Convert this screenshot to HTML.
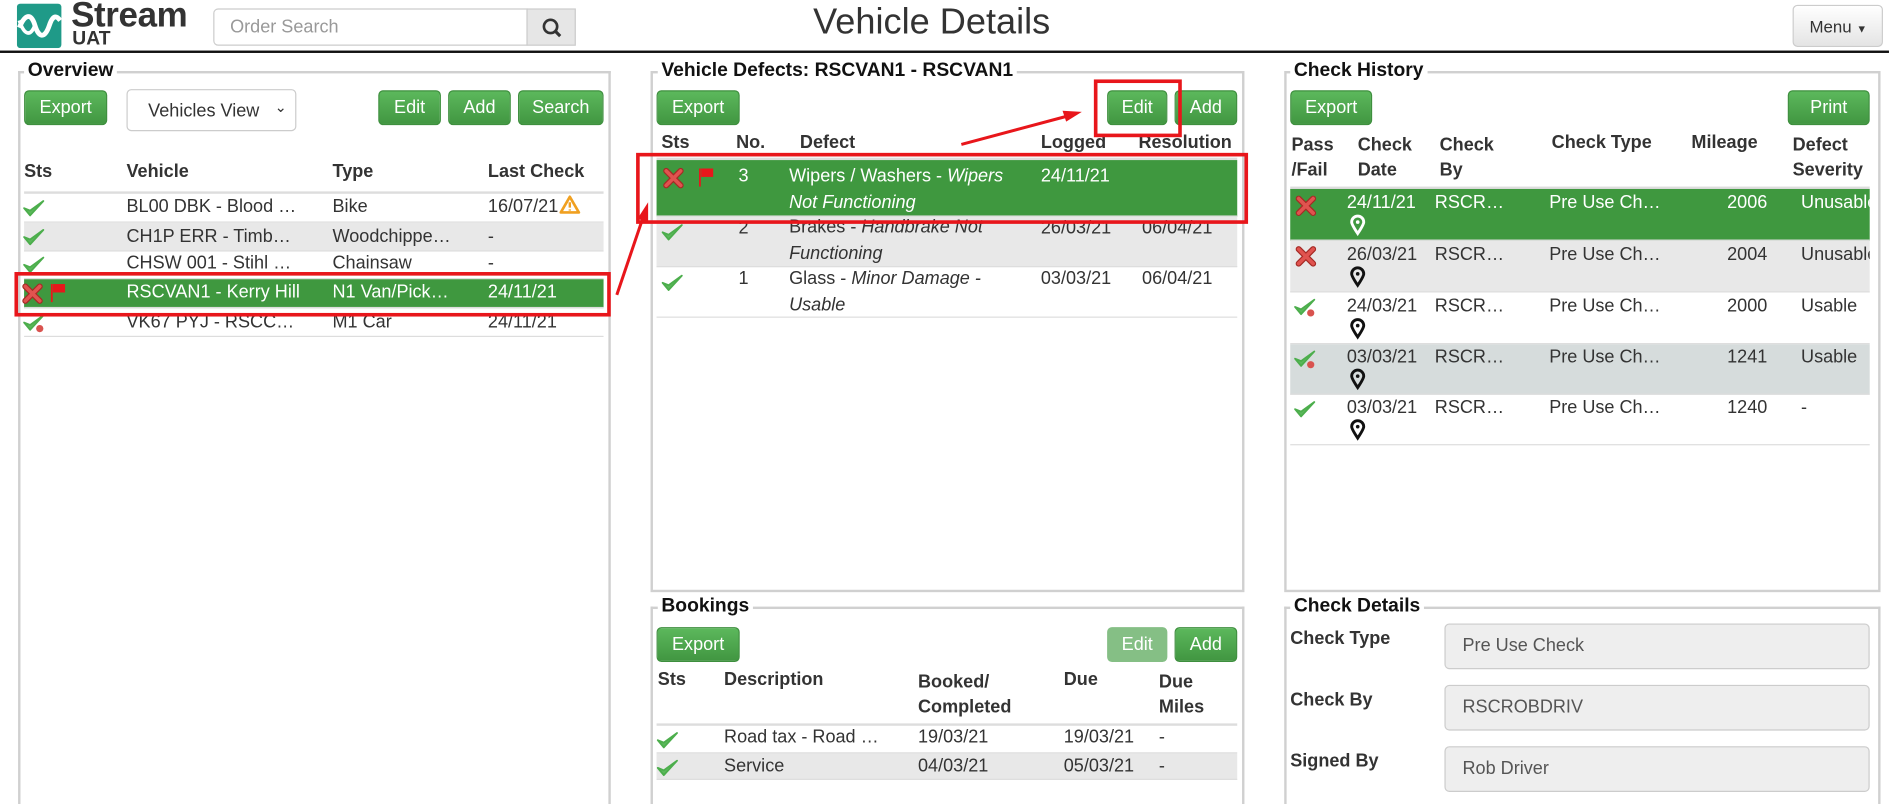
<!DOCTYPE html>
<html><head><meta charset="utf-8"><style>
html,body{margin:0;padding:0;background:#fff;overflow:hidden;width:1889px;height:804px}
#w{position:absolute;left:0;top:0;width:1568px;height:668px;overflow:hidden;transform:scale(1.2047,1.2036);transform-origin:0 0;font-family:"Liberation Sans",Arial,sans-serif;color:#333;font-size:15px}
.a{position:absolute;white-space:nowrap}
.b{position:absolute;background:linear-gradient(#5cb85c,#419641);border:1px solid #3e8f3e;border-radius:4px;color:#fff;text-align:center;box-sizing:border-box;font-size:15px}
.fs{position:absolute;border:2px solid #d0d0d0;box-sizing:border-box}
.ob{border-bottom:none}
.lg{position:absolute;background:#fff;font-weight:bold;font-size:16px;color:#111;padding:0 3px;line-height:18px}
.h{font-weight:bold}
.row{position:absolute;box-sizing:border-box;border-bottom:1px solid #ddd}
.g{background:#3f983f;color:#fff}
.gr{background:#e8e8e8}
.in{position:absolute;background:#eee;border:1px solid #ccc;border-radius:4px;box-sizing:border-box;color:#555;padding-left:14px}
i{font-style:italic}
</style></head><body><div id="w">
<svg class="a" style="left:14px;top:3px" width="37" height="37" viewBox="0 0 37 37"><rect width="37" height="37" rx="3" fill="#1f9a88"/><path d="M2 20 C7 8,12 8,15 18 C18 28,23 30,27 18 C30 9,33 10,36 14" stroke="#fff" stroke-width="4" fill="none"/><path d="M2 14 C6 26,11 28,15 18" stroke="#fff" stroke-width="3" fill="none"/></svg>
<div class="a" style="left:59px;top:-3px;font-size:29px;font-weight:bold;color:#333;letter-spacing:-0.3px">Stream</div>
<div class="a" style="left:60px;top:24px;font-size:16px;font-weight:bold;color:#333">UAT</div>
<div class="a" style="left:177px;top:7px;width:261px;height:31px;border:1px solid #ccc;border-radius:4px 0 0 4px;box-sizing:border-box;color:#999;padding:6px 0 0 13px">Order Search</div>
<div class="a" style="left:437px;top:7px;width:41px;height:31px;background:#e6e6e6;border:1px solid #ccc;box-sizing:border-box"><svg width="41" height="31" viewBox="0 0 41 31"><circle cx="19" cy="14" r="5.5" stroke="#333" stroke-width="2.2" fill="none"/><path d="M23 18 L27 22" stroke="#333" stroke-width="2.6"/></svg></div>
<div class="a" style="left:675px;top:2px;font-size:30px;color:#333">Vehicle Details</div>
<div class="a" style="left:1488px;top:4px;width:75px;height:35px;background:linear-gradient(#fff,#e4e4e4);border:1px solid #ccc;border-radius:4px;box-sizing:border-box;font-size:14px;padding:9px 0 0 13px">Menu <span style="font-size:9px">▼</span></div>
<div class="a" style="left:0;top:42px;width:1568px;height:2px;background:#111"></div>

<div class="fs ob" style="left:15px;top:59px;width:492px;height:609px"></div>
<div class="lg" style="left:20px;top:50px">Overview</div>
<div class="b" style="left:20px;top:75px;width:69px;height:29px;line-height:27px">Export</div>
<div class="a" style="left:105px;top:74px;width:141px;height:35px;border:1px solid #ccc;border-radius:4px;box-sizing:border-box;padding:9px 0 0 17px">Vehicles View <span style="position:absolute;left:122px;top:7px;font-size:12px">⌄</span></div>
<div class="b" style="left:314px;top:75px;width:52px;height:29px;line-height:27px">Edit</div>
<div class="b" style="left:372px;top:75px;width:52px;height:29px;line-height:27px">Add</div>
<div class="b" style="left:430px;top:75px;width:71px;height:29px;line-height:27px">Search</div>
<div class="a h" style="left:20px;top:134px">Sts</div><div class="a h" style="left:105px;top:134px">Vehicle</div><div class="a h" style="left:276px;top:134px">Type</div><div class="a h" style="left:405px;top:134px">Last Check</div>
<div class="a" style="left:20px;top:159px;width:481px;height:2px;background:#ddd"></div>
<div class="row" style="left:20px;top:161px;width:481px;height:24px"></div>
<div class="row gr" style="left:20px;top:185px;width:481px;height:24px"></div>
<div class="row" style="left:20px;top:209px;width:481px;height:23px"></div>
<div class="row g" style="left:20px;top:232px;width:481px;height:24px"></div>
<div class="row" style="left:20px;top:256px;width:481px;height:24px"></div>
<div class="a" style="left:105px;top:163px">BL00 DBK - Blood …</div><div class="a" style="left:276px;top:163px">Bike</div><div class="a" style="left:405px;top:163px">16/07/21</div>
<svg class="a" style="left:464px;top:162px" width="18" height="16" viewBox="0 0 18 16"><path d="M9 1.5 L16.5 14.5 H1.5 Z" fill="none" stroke="#f0a020" stroke-width="2.2" stroke-linejoin="round"/><path d="M9 6 V10.5 M9 12 V13" stroke="#f0a020" stroke-width="2"/></svg>
<div class="a" style="left:105px;top:188px">CH1P ERR - Timb…</div><div class="a" style="left:276px;top:188px">Woodchippe…</div><div class="a" style="left:405px;top:188px">-</div>
<div class="a" style="left:105px;top:210px">CHSW 001 - Stihl …</div><div class="a" style="left:276px;top:210px">Chainsaw</div><div class="a" style="left:405px;top:210px">-</div>
<div class="a" style="left:105px;top:234px;color:#fff">RSCVAN1 - Kerry Hill</div><div class="a" style="left:276px;top:234px;color:#fff">N1 Van/Pick…</div><div class="a" style="left:405px;top:234px;color:#fff">24/11/21</div>
<div class="a" style="left:105px;top:259px">VK67 PYJ - RSCC…</div><div class="a" style="left:276px;top:259px">M1 Car</div><div class="a" style="left:405px;top:259px">24/11/21</div>

<div class="fs" style="left:540px;top:59px;width:493px;height:433px"></div>
<div class="lg" style="left:546px;top:50px">Vehicle Defects: RSCVAN1 - RSCVAN1</div>
<div class="b" style="left:545px;top:75px;width:69px;height:29px;line-height:27px">Export</div>
<div class="b" style="left:919px;top:75px;width:50px;height:29px;line-height:27px">Edit</div>
<div class="b" style="left:975px;top:75px;width:52px;height:29px;line-height:27px">Add</div>
<div class="a h" style="left:549px;top:110px">Sts</div><div class="a h" style="left:611px;top:110px">No.</div><div class="a h" style="left:664px;top:110px">Defect</div><div class="a h" style="left:864px;top:110px">Logged</div><div class="a h" style="left:945px;top:110px">Resolution</div>
<div class="a" style="left:545px;top:131px;width:482px;height:2px;background:#ddd"></div>
<div class="row g" style="left:545px;top:133px;width:482px;height:47px"></div>
<div class="row gr" style="left:545px;top:180px;width:482px;height:42px"></div>
<div class="row" style="left:545px;top:222px;width:482px;height:42px"></div>
<div class="a" style="left:613px;top:138px;color:#fff">3</div>
<div class="a" style="left:655px;top:136px;color:#fff;line-height:22px">Wipers / Washers - <i>Wipers</i><br><i>Not Functioning</i></div>
<div class="a" style="left:864px;top:138px;color:#fff">24/11/21</div>
<div class="a" style="left:613px;top:181px">2</div>
<div class="a" style="left:655px;top:178px;line-height:22px">Brakes - <i>Handbrake Not</i><br><i>Functioning</i></div>
<div class="a" style="left:864px;top:181px">26/03/21</div><div class="a" style="left:948px;top:181px">06/04/21</div>
<div class="a" style="left:613px;top:223px">1</div>
<div class="a" style="left:655px;top:221px;line-height:22px">Glass - <i>Minor Damage -</i><br><i>Usable</i></div>
<div class="a" style="left:864px;top:223px">03/03/21</div><div class="a" style="left:948px;top:223px">06/04/21</div>

<div class="fs ob" style="left:540px;top:504px;width:493px;height:164px"></div>
<div class="lg" style="left:546px;top:495px">Bookings</div>
<div class="b" style="left:545px;top:521px;width:69px;height:29px;line-height:27px">Export</div>
<div class="b" style="left:919px;top:521px;width:50px;height:29px;line-height:27px;background:#85bf85;border-color:#85bf85">Edit</div>
<div class="b" style="left:975px;top:521px;width:52px;height:29px;line-height:27px">Add</div>
<div class="a h" style="left:546px;top:556px">Sts</div><div class="a h" style="left:601px;top:556px">Description</div>
<div class="a h" style="left:762px;top:556px;line-height:21px">Booked/<br>Completed</div><div class="a h" style="left:883px;top:556px">Due</div>
<div class="a h" style="left:962px;top:556px;line-height:21px">Due<br>Miles</div>
<div class="a" style="left:545px;top:601px;width:482px;height:2px;background:#ddd"></div>
<div class="row" style="left:545px;top:603px;width:482px;height:23px"></div>
<div class="row gr" style="left:545px;top:626px;width:482px;height:22px"></div>
<div class="a" style="left:601px;top:604px">Road tax - Road …</div><div class="a" style="left:762px;top:604px">19/03/21</div><div class="a" style="left:883px;top:604px">19/03/21</div><div class="a" style="left:962px;top:604px">-</div>
<div class="a" style="left:601px;top:628px">Service</div><div class="a" style="left:762px;top:628px">04/03/21</div><div class="a" style="left:883px;top:628px">05/03/21</div><div class="a" style="left:962px;top:628px">-</div>

<div class="fs" style="left:1066px;top:59px;width:495px;height:433px"></div>
<div class="lg" style="left:1071px;top:50px">Check History</div>
<div class="b" style="left:1071px;top:75px;width:68px;height:29px;line-height:27px">Export</div>
<div class="b" style="left:1484px;top:75px;width:68px;height:29px;line-height:27px">Print</div>
<div class="a h" style="left:1072px;top:110px;line-height:21px">Pass<br>/Fail</div>
<div class="a h" style="left:1127px;top:110px;line-height:21px">Check<br>Date</div>
<div class="a h" style="left:1195px;top:110px;line-height:21px">Check<br>By</div>
<div class="a h" style="left:1288px;top:110px">Check Type</div>
<div class="a h" style="left:1404px;top:110px">Mileage</div>
<div class="a h" style="left:1488px;top:110px;line-height:21px">Defect<br>Severity</div>
<div class="a" style="left:1071px;top:155px;width:481px;height:3px;background:#ddd"></div>
<div class="row g" style="left:1071px;top:157px;width:481px;height:43px"></div>
<div class="row gr" style="left:1071px;top:200px;width:481px;height:43px"></div>
<div class="row" style="left:1071px;top:243px;width:481px;height:43px"></div>
<div class="row" style="left:1071px;top:286px;width:481px;height:42px;background:#d6dcdc"></div>
<div class="row" style="left:1071px;top:328px;width:481px;height:42px"></div>

<div class="fs ob" style="left:1066px;top:504px;width:495px;height:164px"></div>
<div class="lg" style="left:1071px;top:495px">Check Details</div>
<div class="a h" style="left:1071px;top:522px">Check Type</div>
<div class="a h" style="left:1071px;top:573px">Check By</div>
<div class="a h" style="left:1071px;top:624px">Signed By</div>
<div class="in" style="left:1199px;top:518px;width:353px;height:38px;line-height:36px">Pre Use Check</div>
<div class="in" style="left:1199px;top:569px;width:353px;height:38px;line-height:36px">RSCROBDRIV</div>
<div class="in" style="left:1199px;top:620px;width:353px;height:38px;line-height:36px">Rob Driver</div>

<svg class="a" style="left:0;top:0" width="1568" height="668" viewBox="0 0 1568 668">
<defs>
<clipPath id="cp"><rect x="1071" y="150" width="481" height="230"/></clipPath>
<g id="ck"><path d="M1 8 L6 14 L17 2 L6 10 Z" fill="#5cb85c" stroke="#4cae4c" stroke-width="1.5" stroke-linejoin="round"/></g>
<g id="x"><path d="M2 3 L14 15 M14 3 L2 15" stroke="#a52a25" stroke-width="5" stroke-linecap="round"/><path d="M2 3 L14 15 M14 3 L2 15" stroke="#e0534f" stroke-width="3" stroke-linecap="round"/></g>
<g id="fl"><path d="M1 1 V16" stroke="#e8161b" stroke-width="1.5"/><path d="M2 1 H12 V8 H2 Z" fill="#e8161b"/></g>
<g id="pn"><path d="M6 15 C2 9,1 7,1 5.5 A5 5 0 0 1 11 5.5 C11 7,10 9,6 15 Z" stroke="currentColor" stroke-width="2.4" fill="none"/><circle cx="6" cy="5.5" r="1.5" fill="currentColor"/></g>
<g id="cd"><use href="#ck"/><circle cx="14" cy="13" r="3" fill="#d9534f"/></g>
</defs>
<use href="#ck" x="19" y="165"/><use href="#ck" x="19" y="189"/><use href="#ck" x="19" y="212"/>
<use href="#x" x="19" y="235"/><use href="#fl" x="42" y="235"/><use href="#cd" x="19" y="260"/>
<use href="#x" x="551" y="139"/><use href="#fl" x="580" y="139"/><use href="#ck" x="549" y="185"/><use href="#ck" x="549" y="227"/>
<use href="#ck" x="545" y="607"/><use href="#ck" x="545" y="630"/>
<use href="#x" x="1076" y="162"/><use href="#x" x="1076" y="204"/><use href="#cd" x="1074" y="247"/><use href="#cd" x="1074" y="290"/><use href="#ck" x="1074" y="332"/>
<g font-family="Liberation Sans, Arial, sans-serif" font-size="15" clip-path="url(#cp)">
<text x="1118" y="173" fill="#fff">24/11/21</text><text x="1191" y="173" fill="#fff">RSCR…</text><text x="1286" y="173" fill="#fff">Pre Use Ch…</text><text x="1467" y="173" fill="#fff" text-anchor="end">2006</text><text x="1495" y="173" fill="#fff">Unusable</text>
<text x="1118" y="216" fill="#333">26/03/21</text><text x="1191" y="216" fill="#333">RSCR…</text><text x="1286" y="216" fill="#333">Pre Use Ch…</text><text x="1467" y="216" fill="#333" text-anchor="end">2004</text><text x="1495" y="216" fill="#333">Unusable</text>
<text x="1118" y="259" fill="#333">24/03/21</text><text x="1191" y="259" fill="#333">RSCR…</text><text x="1286" y="259" fill="#333">Pre Use Ch…</text><text x="1467" y="259" fill="#333" text-anchor="end">2000</text><text x="1495" y="259" fill="#333">Usable</text>
<text x="1118" y="301" fill="#333">03/03/21</text><text x="1191" y="301" fill="#333">RSCR…</text><text x="1286" y="301" fill="#333">Pre Use Ch…</text><text x="1467" y="301" fill="#333" text-anchor="end">1241</text><text x="1495" y="301" fill="#333">Usable</text>
<text x="1118" y="343" fill="#333">03/03/21</text><text x="1191" y="343" fill="#333">RSCR…</text><text x="1286" y="343" fill="#333">Pre Use Ch…</text><text x="1467" y="343" fill="#333" text-anchor="end">1240</text><text x="1495" y="343" fill="#333">-</text>
</g>
<use href="#pn" x="1121" y="179" style="color:#fff"/><use href="#pn" x="1121" y="222" style="color:#111"/><use href="#pn" x="1121" y="265" style="color:#111"/><use href="#pn" x="1121" y="307" style="color:#111"/><use href="#pn" x="1121" y="349" style="color:#111"/>
<rect x="13.5" y="227.5" width="492" height="34" fill="none" stroke="#e8161b" stroke-width="3"/>
<rect x="529.5" y="128.5" width="505" height="56" fill="none" stroke="#e8161b" stroke-width="3"/>
<rect x="909.5" y="67.5" width="70" height="45" fill="none" stroke="#e8161b" stroke-width="3"/>
<path d="M512 245 L534 180" stroke="#e8161b" stroke-width="2.5"/><path d="M538 168 L529 182 L538 184 Z" fill="#e8161b"/>
<path d="M798 120 L884 97" stroke="#e8161b" stroke-width="2.5"/><path d="M898 93 L882 92 L885 101 Z" fill="#e8161b"/>
</svg>
</div></body></html>
